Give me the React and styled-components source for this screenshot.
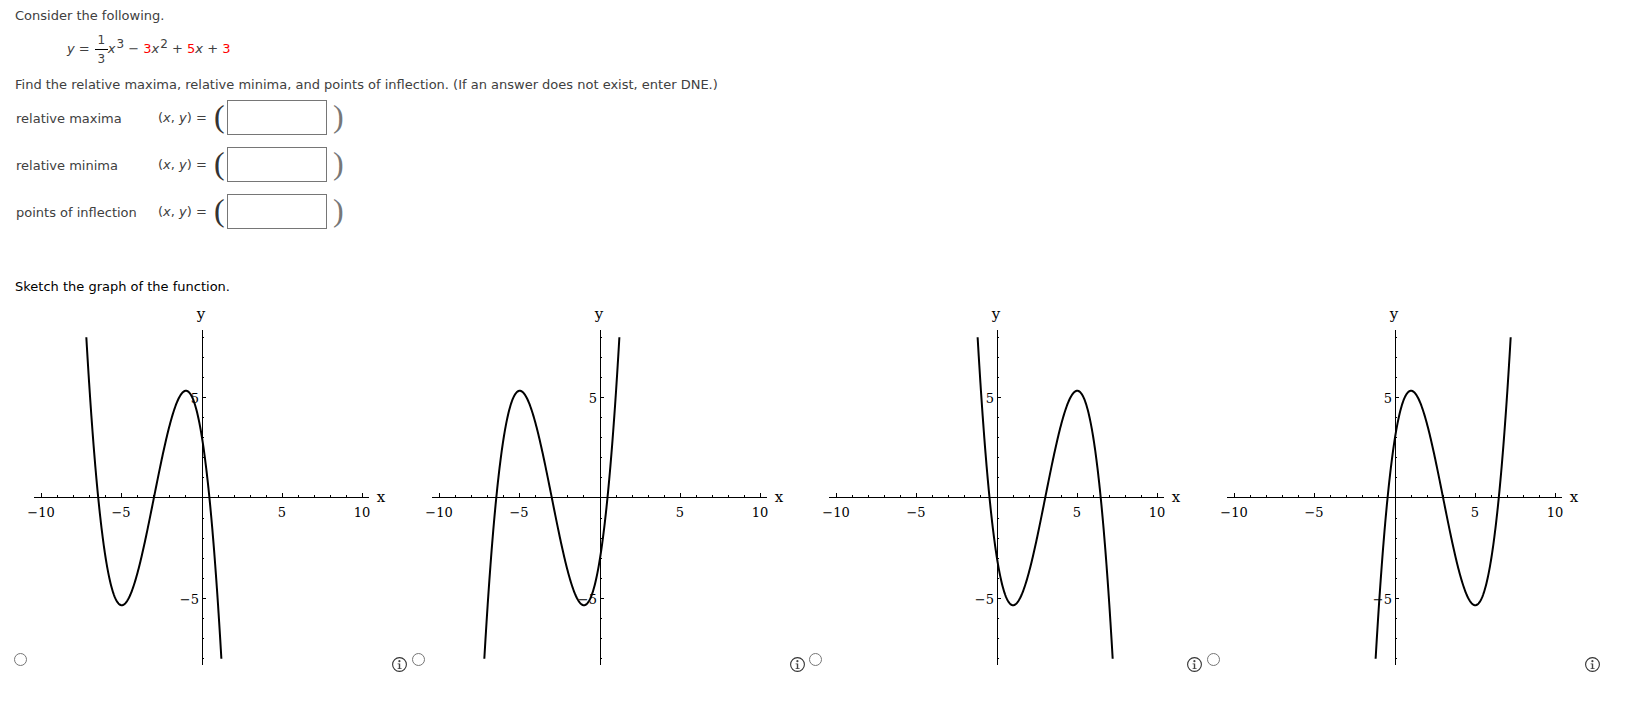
import React from "react";
import styled, { createGlobalStyle } from "styled-components";

const GlobalStyle = createGlobalStyle`
  body {
    margin: 0;
    background: #fff;
    color: #404040;
    font: 13px/16px Verdana, "DejaVu Sans", sans-serif;
  }
`;

const Page = styled.main`
  padding: 8px 22px 36px 14px;
`;

const Text = styled.p`
  margin: 0;
  padding-left: 1px;
  color: ${(p) => (p.$strong ? "#000" : "inherit")};
`;

const Equation = styled.div`
  display: flex;
  align-items: center;
  height: 36px;
  margin: 7px 0 10px 53px;
`;

const Term = styled.span`
  white-space: pre;
`;

const Value = styled.span`
  color: #f00;
`;

const Power = styled.sup`
  margin-left: 1px;
  font-size: 12px;
  line-height: 0;
  vertical-align: 5px;
`;

const Fraction = styled.span`
  display: flex;
  flex-direction: column;
  align-items: center;
  width: 13px;
  margin-left: 5px;
`;

const FractionPart = styled.span`
  font-size: 12px;
  line-height: 18px;
`;

const FractionBar = styled.span`
  width: 100%;
  height: 1px;
  background: #000;
`;

const Answers = styled.form`
  display: grid;
  gap: 12px;
  margin: 7px 0 50px 2px;
`;

const AnswerRow = styled.div`
  display: grid;
  grid-template-columns: 142px 56px auto 1fr;
  align-items: center;
`;

const AnswerLabel = styled.label`
  padding-top: 3px;
`;

const Coordinates = styled.span`
  padding-top: 1px;
  white-space: pre;
`;

const Entry = styled.span`
  display: flex;
  align-items: center;
`;

const Paren = styled.span`
  box-sizing: border-box;
  width: ${(p) => (p.$light ? "18px" : "13px")};
  height: 35px;
  padding-left: ${(p) => (p.$light ? "6px" : "0")};
  color: ${(p) => (p.$light ? "#777" : "#333")};
  font: 32px/32px "Liberation Serif", serif;
`;

const AnswerInput = styled.input`
  box-sizing: border-box;
  width: 100px;
  height: 35px;
  padding: 4px;
  border: 1px solid #767676;
  background: #fff;
  font: inherit;
`;

const Choices = styled.div`
  display: grid;
  grid-template-columns: repeat(auto-fill, minmax(390px, 1fr));
  margin-top: 5px;
`;

const Choice = styled.div`
  display: flex;
  align-items: flex-end;
`;

const Radio = styled.input`
  width: 13px;
  height: 13px;
  margin: 0 3px 10px 0;
`;

const Graph = styled.svg`
  display: block;
  flex: none;
  overflow: visible;
`;

const TickLabel = styled.text`
  font: 13px "DejaVu Serif", serif;
  fill: #000;
`;

const AxisName = styled.text`
  font: 15px "DejaVu Serif", serif;
  fill: #000;
`;

const InfoButton = styled.button`
  display: flex;
  width: 15px;
  height: 15px;
  margin: 0 0 4px 2px;
  padding: 0;
  border: 0;
  background: none;
`;

const OX = 172;
const OY = 198;
const UX = 16.05;
const UY = 20.1;
const LIMIT = 8;

const cubic = (x) => (x * x * x) / 3 - 3 * x * x + 5 * x + 3;

// The four options are the same cubic, reflected in one or both axes.
const graphs = [
  { id: "a", mirror: -1, flip: 1 },
  { id: "b", mirror: -1, flip: -1 },
  { id: "c", mirror: 1, flip: -1 },
  { id: "d", mirror: 1, flip: 1 },
];

const solve = (target, low, high) => {
  let a = low;
  let b = high;
  for (let i = 0; i < 40; i += 1) {
    const mid = (a + b) / 2;
    if (cubic(mid) < target) a = mid;
    else b = mid;
  }
  return a;
};

const START = solve(-LIMIT, -3, 0);
const END = solve(LIMIT, 5, 9);

const curve = (mirror, flip) => {
  const steps = 240;
  const points = [];
  for (let i = 0; i <= steps; i += 1) {
    const x = START + ((END - START) * i) / steps;
    points.push(
      `${(OX + mirror * x * UX).toFixed(2)},${(OY - flip * cubic(x) * UY).toFixed(2)}`
    );
  }
  return points.join(" ");
};

const range = (n) =>
  Array.from({ length: 2 * n + 1 }, (_, i) => i - n).filter((v) => v !== 0);

const snap = (v) => Math.floor(v) + 0.5;

const axes = [
  "M4 197.5H339M172.5 30V365",
  ...range(10).map((v) => `M${snap(OX + v * UX)} 197V${v % 5 === 0 ? 193 : 195}`),
  ...range(8).map((v) => `M173 ${snap(OY - v * UY)}H${v % 5 === 0 ? 176 : 174}`),
].join("");

function Plot({ mirror, flip }) {
  return (
    <Graph width="360" height="376" viewBox="0 0 360 376" aria-hidden="true">
      <path d={axes} stroke="#000" fill="none" shapeRendering="crispEdges" />
      <TickLabel x="11" y="217" textAnchor="middle">−10</TickLabel>
      <TickLabel x="91" y="217" textAnchor="middle">−5</TickLabel>
      <TickLabel x="252" y="217" textAnchor="middle">5</TickLabel>
      <TickLabel x="332" y="217" textAnchor="middle">10</TickLabel>
      <TickLabel x="169" y="103" textAnchor="end">5</TickLabel>
      <TickLabel x="169" y="304" textAnchor="end">−5</TickLabel>
      <AxisName x="351" y="202" textAnchor="middle">x</AxisName>
      <AxisName x="171" y="19" textAnchor="middle">y</AxisName>
      <polyline
        points={curve(mirror, flip)}
        fill="none"
        stroke="#000"
        strokeWidth="2"
      />
    </Graph>
  );
}

function InfoIcon() {
  return (
    <svg width="15" height="15" viewBox="0 0 15 15" aria-hidden="true">
      <circle cx="7.5" cy="7.5" r="6.9" fill="none" stroke="#333" strokeWidth="1.1" />
      <circle cx="7.4" cy="4.2" r="1.1" fill="#444" />
      <path d="M5.6 6.4H8.2V11.2H9.6V12H5.6V11.2H6.8V7.2H5.6Z" fill="#444" />
    </svg>
  );
}

const answers = [
  { id: "maxima", label: "relative maxima" },
  { id: "minima", label: "relative minima" },
  { id: "inflection", label: "points of inflection" },
];

export default function App() {
  return (
    <>
      <GlobalStyle />
      <Page>
        <Text>Consider the following.</Text>
        <Equation>
          <Term><i>y</i> =</Term>
          <Fraction>
            <FractionPart>1</FractionPart>
            <FractionBar />
            <FractionPart>3</FractionPart>
          </Fraction>
          <Term>
            <i>x</i><Power>3</Power>
            {" − "}
            <Value>3</Value><i>x</i><Power>2</Power>
            {" + "}
            <Value>5</Value><i>x</i>
            {" + "}
            <Value>3</Value>
          </Term>
        </Equation>
        <Text>
          Find the relative maxima, relative minima, and points of inflection.
          (If an answer does not exist, enter DNE.)
        </Text>
        <Answers>
          {answers.map(({ id, label }) => (
            <AnswerRow key={id}>
              <AnswerLabel htmlFor={id}>{label}</AnswerLabel>
              <Coordinates>(<i>x</i>, <i>y</i>) =</Coordinates>
              <Entry>
                <Paren>(</Paren>
                <AnswerInput id={id} type="text" />
                <Paren $light>)</Paren>
              </Entry>
            </AnswerRow>
          ))}
        </Answers>
        <Text $strong>Sketch the graph of the function.</Text>
        <Choices role="radiogroup" aria-label="Sketch the graph of the function.">
          {graphs.map(({ id, mirror, flip }) => (
            <Choice key={id}>
              <Radio type="radio" name="graph" id={`graph-${id}`} />
              <label htmlFor={`graph-${id}`}>
                <Plot mirror={mirror} flip={flip} />
              </label>
              <InfoButton type="button" aria-label="Graph description">
                <InfoIcon />
              </InfoButton>
            </Choice>
          ))}
        </Choices>
      </Page>
    </>
  );
}
